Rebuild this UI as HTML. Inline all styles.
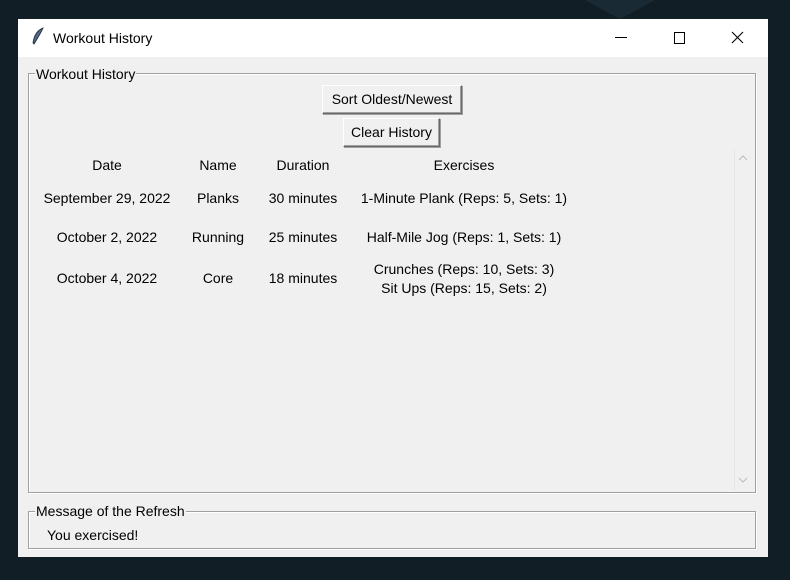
<!DOCTYPE html>
<html><head><style>
body{margin:0;width:790px;height:580px;background:#111e26;position:relative;overflow:hidden;font-family:"Liberation Sans",sans-serif;font-size:14px;color:#000}
.a{position:absolute}
.c{position:absolute;transform:translateX(-50%);white-space:nowrap;text-align:center}
.win{left:18px;top:19px;width:750px;height:538px;background:#f0f0f0}
.title{left:18px;top:19px;width:750px;height:38px;background:#fff}
.fr{border:1px solid #a0a0a0;box-shadow:inset 1px 1px 0 #fff,1px 1px 0 #fff}
.lg{background:#f0f0f0;padding:0 1px;line-height:14px}
.btn{background:#f0f0f0;border:1px solid;border-color:#fff #696969 #696969 #fff;box-shadow:1px 1px 0 #a0a0a0, inset -1px -1px 0 #a0a0a0;line-height:27px;text-align:center;white-space:nowrap}
</style></head><body>
<div class="a" style="left:585px;top:0;width:70px;height:19px;background:#1a2a34;clip-path:polygon(0 0,100% 0,50% 100%)"></div>
<div class="a win"></div>
<div class="a title"></div>
<svg class="a" style="left:30px;top:27px" width="16" height="20" viewBox="0 0 16 20"><path d="M13 1 C8 3 4 8 3 16 L4 17 C7 12 11 6 13 1Z" fill="#4a6a8a" stroke="#223" stroke-width="0.8"/></svg>
<div class="a" style="left:53px;top:30px;font-size:14px">Workout History</div>
<div class="a" style="left:615px;top:37px;width:12px;height:1px;background:#000"></div>
<div class="a" style="left:674px;top:32px;width:9px;height:10px;border:1px solid #000"></div>
<svg class="a" style="left:731px;top:31px" width="13" height="13"><path d="M1 1L12 12M12 1L1 12" stroke="#000" stroke-width="1.1"/></svg>

<div class="a fr" style="left:28px;top:73px;width:726px;height:418px"></div>
<div class="a lg" style="left:35px;top:67px">Workout History</div>
<div class="a btn" style="left:322px;top:85px;width:138px">Sort Oldest/Newest</div>
<div class="a btn" style="left:343px;top:118px;width:95px">Clear History</div>

<div class="a" style="left:734px;top:150px;width:17px;height:340px;background:#f0f0f0;border-left:1px solid #e6e6e6"></div>
<svg class="a" style="left:738px;top:154px" width="10" height="8"><path d="M1 6L5 2L9 6" stroke="#bbb" fill="none"/></svg>
<svg class="a" style="left:738px;top:476px" width="10" height="8"><path d="M1 2L5 6L9 2" stroke="#bbb" fill="none"/></svg>

<div class="c" style="left:107px;top:157px">Date</div>
<div class="c" style="left:218px;top:157px">Name</div>
<div class="c" style="left:303px;top:157px">Duration</div>
<div class="c" style="left:464px;top:157px">Exercises</div>
<div class="c" style="left:107px;top:190px">September 29, 2022</div>
<div class="c" style="left:218px;top:190px">Planks</div>
<div class="c" style="left:303px;top:190px">30 minutes</div>
<div class="c" style="left:464px;top:190px">1-Minute Plank (Reps: 5, Sets: 1)</div>
<div class="c" style="left:107px;top:229px">October 2, 2022</div>
<div class="c" style="left:218px;top:229px">Running</div>
<div class="c" style="left:303px;top:229px">25 minutes</div>
<div class="c" style="left:464px;top:229px">Half-Mile Jog (Reps: 1, Sets: 1)</div>
<div class="c" style="left:107px;top:270px">October 4, 2022</div>
<div class="c" style="left:218px;top:270px">Core</div>
<div class="c" style="left:303px;top:270px">18 minutes</div>
<div class="c" style="left:464px;top:260px;line-height:19px">Crunches (Reps: 10, Sets: 3)<br>Sit Ups (Reps: 15, Sets: 2)</div>

<div class="a fr" style="left:28px;top:511px;width:726px;height:36px"></div>
<div class="a lg" style="left:35px;top:504px">Message of the Refresh</div>
<div class="a" style="left:47px;top:527px">You exercised!</div>
</body></html>
